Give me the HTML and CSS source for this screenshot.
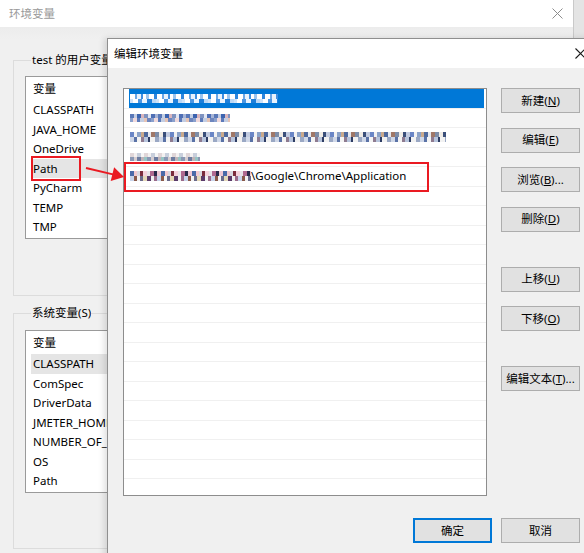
FILE: index.html
```html
<!DOCTYPE html>
<html lang="zh-CN">
<head>
<meta charset="utf-8">
<title>编辑环境变量</title>
<link rel="stylesheet" href="styles.css">
</head>
<body>
<div class="screen">
  <div class="win-outer">
    <div class="titlebar">
      <span class="title-text">环境变量</span>
      <svg class="x-outer" width="11" height="11" viewBox="0 0 11 11"><path d="M0.5 0.5 L10.5 10.5 M10.5 0.5 L0.5 10.5" stroke="#8c8c8c" stroke-width="1" fill="none"/></svg>
    </div>
    <div class="outer-body">
      <fieldset class="group g-user">
        <legend>test 的用户变量(U)</legend>
        <div class="listbox">
          <div class="lb-head">变量</div>
          <div class="lb-row">CLASSPATH</div>
          <div class="lb-row">JAVA_HOME</div>
          <div class="lb-row">OneDrive</div>
          <div class="lb-row sel">Path</div>
          <div class="lb-row">PyCharm</div>
          <div class="lb-row">TEMP</div>
          <div class="lb-row">TMP</div>
        </div>
      </fieldset>
      <fieldset class="group g-sys">
        <legend>系统变量(S)</legend>
        <div class="listbox">
          <div class="lb-head">变量</div>
          <div class="lb-row sel">CLASSPATH</div>
          <div class="lb-row">ComSpec</div>
          <div class="lb-row">DriverData</div>
          <div class="lb-row">JMETER_HOME</div>
          <div class="lb-row">NUMBER_OF_PROCESSORS</div>
          <div class="lb-row">OS</div>
          <div class="lb-row">Path</div>
        </div>
      </fieldset>
    </div>
  </div>

  <div class="dialog">
    <div class="dlg-title">
      <span>编辑环境变量</span>
      <svg class="x-dlg" width="11" height="11" viewBox="0 0 11 11"><path d="M0.5 0.5 L10.5 10.5 M10.5 0.5 L0.5 10.5" stroke="#1a1a1a" stroke-width="1.1" fill="none"/></svg>
    </div>
    <div class="dlg-body">
      <div class="pathlist">
        <div class="pl-row"><div class="cell selected"><span class="mz mz1"></span></div></div>
        <div class="pl-row"><div class="cell"><span class="mz mz2"></span></div></div>
        <div class="pl-row"><div class="cell"><span class="mz mz3"></span></div></div>
        <div class="pl-row"><div class="cell"><span class="mz mz4"></span></div></div>
        <div class="pl-row"><div class="cell"><span class="mz mz5"></span><span class="ptxt">\Google\Chrome\Application</span></div></div>
        <div class="pl-row"><div class="cell"></div></div>
        <div class="pl-row"><div class="cell"></div></div>
        <div class="pl-row"><div class="cell"></div></div>
        <div class="pl-row"><div class="cell"></div></div>
        <div class="pl-row"><div class="cell"></div></div>
        <div class="pl-row"><div class="cell"></div></div>
        <div class="pl-row"><div class="cell"></div></div>
        <div class="pl-row"><div class="cell"></div></div>
        <div class="pl-row"><div class="cell"></div></div>
        <div class="pl-row"><div class="cell"></div></div>
        <div class="pl-row"><div class="cell"></div></div>
        <div class="pl-row"><div class="cell"></div></div>
        <div class="pl-row"><div class="cell"></div></div>
        <div class="pl-row"><div class="cell"></div></div>
        <div class="pl-row"><div class="cell"></div></div>
        <div class="pl-row"><div class="cell"></div></div>
      </div>
      <div class="btn-col">
        <button class="btn">新建(<u>N</u>)</button>
        <button class="btn">编辑(<u>E</u>)</button>
        <button class="btn">浏览(<u>B</u>)...</button>
        <button class="btn">删除(<u>D</u>)</button>
        <button class="btn sp-big">上移(<u>U</u>)</button>
        <button class="btn">下移(<u>O</u>)</button>
        <button class="btn sp-big">编辑文本(<u>T</u>)...</button>
      </div>
      <div class="btn-row">
        <button class="btn default">确定</button>
        <button class="btn">取消</button>
      </div>
    </div>
  </div>

  <div class="mark mark-path"></div>
  <div class="mark mark-row"></div>
  <svg class="arrow" width="50" height="35" viewBox="0 0 50 35">
    <line x1="6" y1="13" x2="34" y2="19.6" stroke="#ea1a22" stroke-width="2"/>
    <polygon points="44,22 34.1,12.3 30.7,25.9" fill="#ea1a22"/>
  </svg>
</div>
</body>
</html>
```
FILE: styles.css
```css
* { box-sizing: border-box; }
html, body { margin: 0; padding: 0; }
body {
  font-family: "Noto Sans", "Noto Sans CJK SC", sans-serif;
  font-size: 11.5px;
  color: #000;
  background: #e6e6e6;
}
.screen {
  position: relative;
  width: 584px;
  height: 553px;
  overflow: hidden;
  background: #e4e4e4;
}

/* outer window */
.win-outer {
  width: 574px;
  height: 553px;
  background: #f0f0f0;
  border-right: 1px solid #c9c9c9;
}
.titlebar {
  height: 27px;
  background: #fff;
  display: flex;
  align-items: center;
  justify-content: space-between;
  padding: 0 10px 0 9px;
}
.title-text { color: #999; font-size: 11.5px; line-height: 16px; }
.x-outer { display: block; }
.outer-body {
  padding: 25px 0 0 13px;
  background: linear-gradient(#ececec, #f0f0f0 12px);
}
.group {
  margin: 0;
  padding: 0 0 0 11px;
  width: 94px;
  min-width: 0;
  border: 1px solid #dcdcdc;
  border-right: none;
  overflow: hidden;
}
.group legend {
  padding: 0 0 0 1px;
  margin-left: 6px;
  line-height: 16px;
  height: 16px;
  max-width: 87px;
  overflow: hidden;
  white-space: nowrap;
}
.g-user { height: 244px; }
.g-sys { height: 244px; margin-top: 9px; }
.g-user .listbox { margin-top: 8px; }
.g-sys .listbox { margin-top: 9px; }
.listbox {
  width: 220px;
  border: 1px solid #9a9a9a;
  background: #fff;
  padding-bottom: 1px;
}
.lb-head {
  height: 23px;
  line-height: 23px;
  padding-left: 7px;
}
.lb-row {
  height: 19.5px;
  line-height: 19.5px;
  margin-left: 5px;
  padding-left: 2px;
  white-space: nowrap;
  overflow: hidden;
}
.lb-row.sel { background: #e5e5e5; }

/* dialog */
.dialog {
  position: absolute;
  left: 107px;
  top: 38px;
  width: 490px;
  height: 530px;
  background: #f0f0f0;
  border: 1px solid #8f8f8f;
  box-shadow: -3px 0 6px rgba(0, 0, 0, 0.12);
}
.dlg-title {
  height: 29px;
  background: #fff;
  display: flex;
  align-items: center;
  justify-content: space-between;
  padding: 0 10px 0 6px;
  line-height: 16px;
}
.x-dlg { display: block; }
.dlg-body {
  display: grid;
  grid-template-columns: 364px 79px;
  column-gap: 14px;
  padding: 20px 0 0 15px;
}
.pathlist {
  height: 408px;
  border: 1px solid #8d8d8d;
  background: #fff;
  overflow: hidden;
}
.pl-row {
  height: 19.5px;
  border-bottom: 1px solid #f0f0f0;
}
.cell {
  height: 18.5px;
  margin: 0 2px 0 5px;
  padding-left: 1px;
  display: flex;
  align-items: center;
  white-space: nowrap;
}
.cell.selected { background: #0078d7; }
.ptxt { line-height: 16px; }

.btn-col {
  display: flex;
  flex-direction: column;
}
.btn {
  width: 79px;
  height: 25px;
  padding: 0;
  background: #e1e1e1;
  border: 1px solid #adadad;
  border-radius: 0;
  font-family: inherit;
  font-size: 11.5px;
  color: #000;
  line-height: 16px;
  margin: 0;
}
.btn-col .btn + .btn { margin-top: 14.5px; }
.btn-col .btn.sp-big { margin-top: 35px; }
.btn.default {
  border: 1px solid #0078d7;
  box-shadow: inset 0 0 0 1px #0078d7;
}
.btn-row {
  grid-column: 1 / 3;
  display: flex;
  justify-content: flex-end;
  gap: 9px;
  margin-top: 22px;
}

/* redacted (pixelated) path fragments */
.mz {
  display: inline-block;
  height: 8px;
  flex: none;
}
.mz1 {
  width: 148px;
  height: 9px;
  background:
    repeating-linear-gradient(90deg, #ffffff 0 5px, #6aa6e6 5px 7px, #e8f2fc 7px 11px, #3f8ee0 11px 13px, #ffffff 13px 16px, #9cc4ee 16px 19px, #ffffff 19px 24px, #2f86dc 24px 27px) top / 100% 5px no-repeat,
    repeating-linear-gradient(90deg, #cfe3f8 0 3px, #ffffff 3px 8px, #4b96e2 8px 12px, #e9f3fd 12px 17px, #1f7fd9 17px 22px, #bcd8f5 22px 26px) bottom / 100% 4px no-repeat;
}
.mz2 {
  width: 100px;
  background:
    repeating-linear-gradient(90deg, #5a78b8 0 4px, #c5cfe3 4px 7px, #3c64b0 7px 11px, #d9b5bd 11px 14px, #7f93c0 14px 18px, #e3e7f2 18px 21px, #4f6fb5 21px 25px, #a6b4d6 25px 28px) top / 100% 4px no-repeat,
    repeating-linear-gradient(90deg, #8aa0cc 0 3px, #f0d9dc 3px 7px, #5c7ab9 7px 10px, #c3cde2 10px 14px, #e5c3b5 14px 17px, #6e86be 17px 21px) bottom / 100% 4px no-repeat;
}
.mz3 {
  width: 316px;
  height: 10px;
  background:
    repeating-linear-gradient(90deg, #6a86c6 0 4px, #f2f2f2 4px 7px, #8ba2c8 7px 11px, #c9a98c 11px 14px, #4f6a9e 14px 18px, #e6e9ef 18px 21px, #a07868 21px 25px, #7d8da8 25px 29px, #f0ece6 29px 33px, #3a4f7a 33px 36px, #c2cbe0 36px 40px) top / 100% 5px no-repeat,
    repeating-linear-gradient(90deg, #d0d8e8 0 4px, #5a72a6 4px 7px, #f4f4f4 7px 11px, #8e7b90 11px 14px, #b7c4dc 14px 18px, #2e3d64 18px 20px, #f2f2f2 20px 25px, #9aa8c4 25px 29px) bottom / 100% 5px no-repeat;
}
.mz4 {
  width: 70px;
  background:
    repeating-linear-gradient(90deg, #e0d6d8 0 4px, #f4f1f1 4px 7px, #c8cfdc 7px 11px, #f6f6f6 11px 14px) top / 100% 4px no-repeat,
    repeating-linear-gradient(90deg, #8a98b4 0 4px, #d7cdd0 4px 7px, #6d7ca0 7px 11px, #c0b4b8 11px 14px, #97c4c4 14px 17px) bottom / 100% 4px no-repeat;
}
.mz5 {
  width: 121px;
  height: 10px;
  background:
    repeating-linear-gradient(90deg, #4a6aa8 0 4px, #f1c9cf 4px 7px, #d8d8e0 7px 10px, #7a2c3c 10px 13px, #f3d2dc 13px 17px, #e8e4e8 17px 20px, #b06a90 20px 24px, #2a2a4a 24px 27px, #eec8d4 27px 31px) top / 100% 5px no-repeat,
    repeating-linear-gradient(90deg, #c8d4ea 0 4px, #8a5a4a 4px 7px, #f2f2f2 7px 10px, #6a6a8a 10px 13px, #e4d8b8 13px 17px, #5a3a6a 17px 21px, #f0f0f0 21px 24px, #9a6a8a 24px 27px) bottom / 100% 5px no-repeat;
}

/* annotations */
.mark {
  position: absolute;
  border: 2px solid #ea1a22;
}
.mark-path { left: 31px; top: 156px; width: 50px; height: 25px; }
.mark-row { left: 124px; top: 162px; width: 305px; height: 30px; }
.arrow { position: absolute; left: 80px; top: 155px; }
```
